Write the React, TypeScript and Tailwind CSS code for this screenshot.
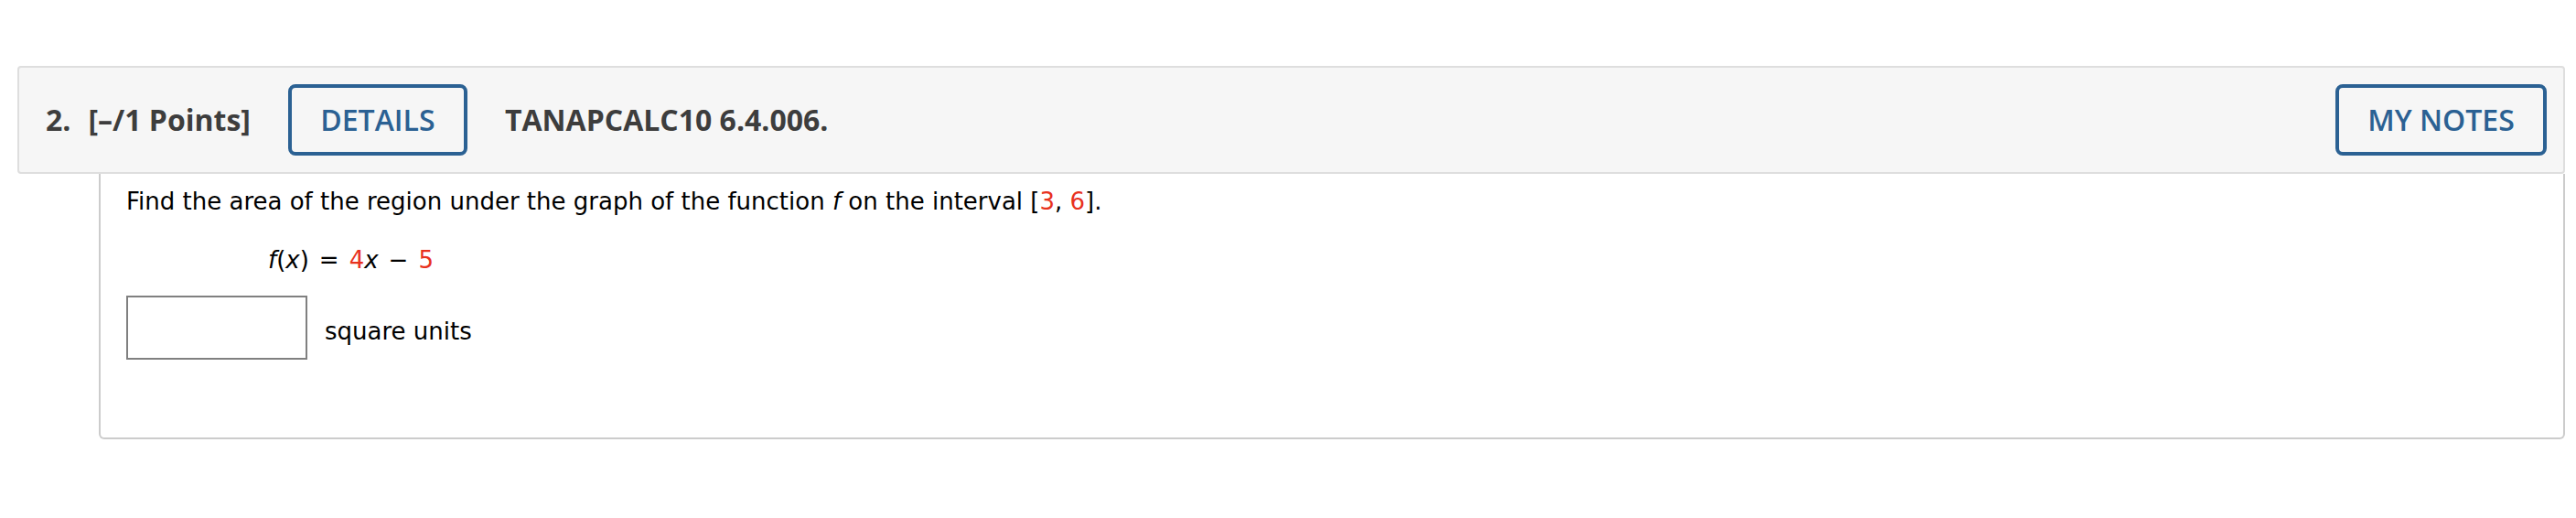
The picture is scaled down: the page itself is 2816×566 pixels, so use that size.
import React from 'react';

const headerFont = { fontFamily: '"Open Sans", "Liberation Sans", sans-serif' };
const bodyFont = { fontFamily: '"DejaVu Sans", Verdana, sans-serif' };

const QuestionHeader: React.FC = () => (
    <div className="ml-[19px] mr-[12px] flex items-center rounded-[4px] border-2 border-[#dedede] bg-[#f6f6f6] py-[18px] pl-[29px] pr-[18px]" style={headerFont}>
        <span className="text-[32px] font-bold text-[#3d3d3d]">2.</span>
        <span className="ml-[19px] text-[32px] font-bold text-[#3d3d3d]">[–/1 Points]</span>
        <button type="button" className="ml-[41px] h-[78px] w-[196px] rounded-[8px] border-4 border-[#2b6193] text-[32px] font-semibold text-[#2b6193]">DETAILS</button>
        <span className="ml-[41px] text-[32px] font-bold text-[#3d3d3d]">TANAPCALC10 6.4.006.</span>
        <div className="flex-1" />
        <button type="button" className="h-[78px] w-[231px] rounded-[8px] border-4 border-[#2b6193] text-[32px] font-semibold text-[#2b6193]">MY NOTES</button>
    </div>
);

const Red: React.FC<{ children: React.ReactNode }> = ({ children }) => <span className="text-[#e8321e]">{children}</span>;

const App: React.FC = () => {
    return (
        <div className="bg-white pt-[72px]">
            <QuestionHeader />
            <div className="ml-[108px] mr-[12px] rounded-b-[6px] border-2 border-t-0 border-[#cccccc] pb-[85px] pl-[28px] pt-[14px] text-[26px] leading-[32px] text-black" style={bodyFont}>
                <p>
                    Find the area of the region under the graph of the function <i>f</i> on the interval [<Red>3</Red>, <Red>6</Red>].
                </p>
                <p className="ml-[155px] mt-[32px]">
                    <i>f</i>(<i>x</i>)<span className="mx-[11px]">=</span><Red>4</Red><i>x</i><span className="mx-[11px]">−</span><Red>5</Red>
                </p>
                <div className="mt-[23px] flex items-center">
                    <input type="text" className="h-[70px] w-[198px] border-2 border-[#808080] bg-white" />
                    <span className="ml-[19px] mt-[8px]">square units</span>
                </div>
            </div>
        </div>
    );
};

export default App;
